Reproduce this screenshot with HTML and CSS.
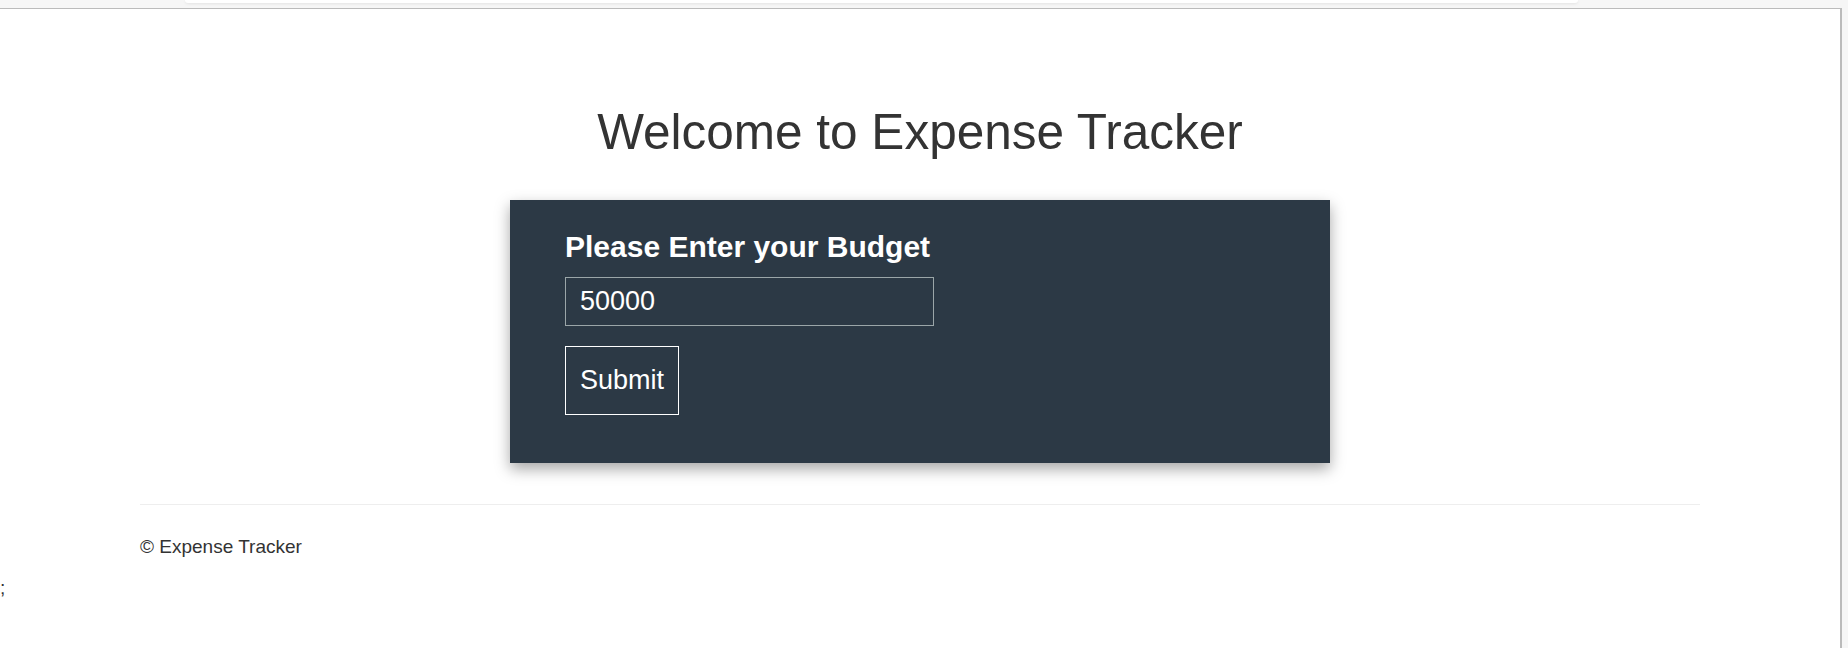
FILE: index.html
```html
<!DOCTYPE html>
<html lang="en">
<head>
<meta charset="utf-8">
<title>Expense Tracker</title>
<link rel="stylesheet" href="styles.css">
</head>
<body>
  <div class="chrome"><div class="tab"></div></div>
  <div class="frame">
    <main class="page">
      <h1 class="title">Welcome to Expense Tracker</h1>
      <section class="card">
        <form class="budget-form">
          <label class="budget-label" for="budget">Please Enter your Budget</label>
          <input id="budget" class="budget-input" type="text" value="50000">
          <button class="submit-btn" type="button">Submit</button>
        </form>
      </section>
      <footer class="footer"><p class="copy">© Expense Tracker</p></footer>
      <div class="stray">;</div>
    </main>
  </div>
</body>
</html>
```

FILE: styles.css
```css
html, body {
  margin: 0;
  height: 100%;
}
body {
  background: #f6f6f6;
  font-family: "Liberation Sans", Arial, sans-serif;
  color: #333;
  overflow: hidden;
}
.chrome {
  height: 8px;
}
.tab {
  margin-left: 185px;
  width: 1393px;
  height: 3px;
  background: #fff;
  border-radius: 0 0 8px 8px;
  box-shadow: 0 1px 3px rgba(0, 0, 0, 0.08);
}
.frame {
  background: #fff;
  border-top: 1px solid #bbb;
  border-right: 2px solid #bbb;
  width: 1840px;
  height: 639px;
  overflow: hidden;
}
.page {
  display: flex;
  flex-direction: column;
  align-items: center;
}
.title {
  font-size: 49.5px;
  font-weight: normal;
  line-height: 56px;
  margin: 95px 0 40px;
  color: #333;
}
.card {
  width: 820px;
  box-sizing: border-box;
  background: #2c3945;
  padding: 30px 55px 48px;
  box-shadow: 0 6px 14px rgba(0, 0, 0, 0.35);
  color: #fff;
}
.budget-form {
  display: flex;
  flex-direction: column;
  align-items: flex-start;
}
.budget-label {
  font-weight: 700;
  font-size: 30px;
  line-height: 34px;
  margin-bottom: 13px;
}
.budget-input {
  width: 369px;
  height: 49px;
  box-sizing: border-box;
  border: 1px solid #9ba6a8;
  background: transparent;
  color: #fff;
  font-family: "Liberation Sans", Arial, sans-serif;
  font-size: 27px;
  padding: 0 14px;
  margin: 0 0 20px;
  outline: none;
}
.submit-btn {
  height: 69px;
  box-sizing: border-box;
  padding: 0 14px;
  border: 1px solid #fff;
  background: transparent;
  color: #fff;
  font-family: "Liberation Sans", Arial, sans-serif;
  font-size: 27px;
  cursor: pointer;
}
.footer {
  width: 1560px;
  margin-top: 41px;
  border-top: 1px solid #eee;
  padding-top: 31px;
}
.copy {
  margin: 0;
  font-size: 19px;
  line-height: 22px;
  color: #333;
}
.stray {
  align-self: flex-start;
  margin-top: 19px;
  font-size: 19px;
  line-height: 22px;
  color: #333;
}
```
